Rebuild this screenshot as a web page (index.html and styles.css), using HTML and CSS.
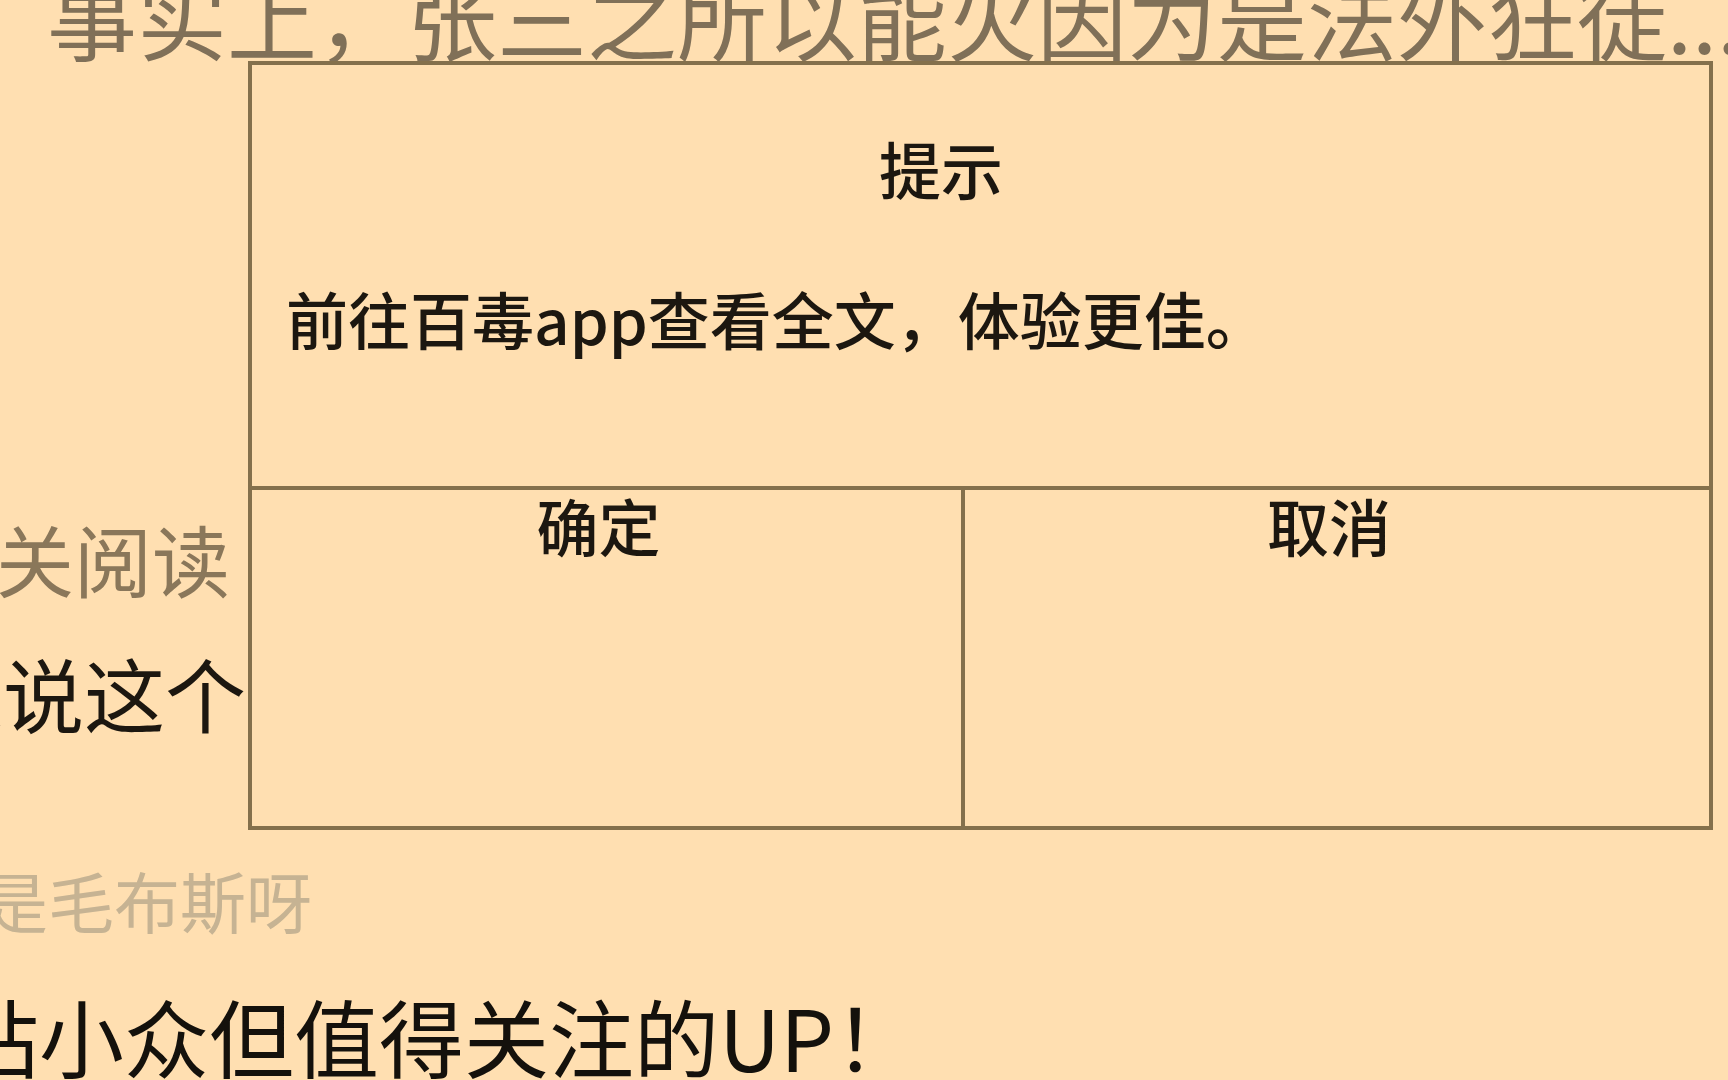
FILE: index.html
```html
<!DOCTYPE html>
<html lang="zh-CN">
<head>
<meta charset="utf-8">
<title>提示</title>
<link rel="stylesheet" href="styles.css">
</head>
<body>
<div class="page">
  <div class="feed">
    <p class="line line-summary">事实上，张三之所以能火因为是法外狂徒...</p>
    <p class="line line-related">相关阅读</p>
    <p class="line line-comment">来说这个</p>
    <p class="line line-author">就是毛布斯呀</p>
    <p class="line line-title">好站小众但值得关注的UP！</p>
  </div>

  <div class="dialog" role="dialog">
    <div class="dialog-main">
      <div class="dialog-title">提示</div>
      <div class="dialog-msg">前往百毒app查看全文，体验更佳。</div>
    </div>
    <div class="dialog-actions">
      <div class="dialog-btn dialog-btn-ok">确定</div>
      <div class="dialog-btn dialog-btn-cancel">取消</div>
    </div>
  </div>
</div>
</body>
</html>
```

FILE: styles.css
```css
html, body {
  margin: 0;
  padding: 0;
}

body {
  width: 1728px;
  height: 1080px;
  overflow: hidden;
  background: #ffdfb1;
  font-family: "Noto Sans CJK SC", "Noto Sans", sans-serif;
  color: #1c1710;
}

.page {
  position: relative;
  width: 1728px;
  height: 1080px;
  overflow: hidden;
}

.feed {
  display: flex;
  flex-direction: column;
}

.line {
  margin: 0;
  line-height: 1;
  white-space: nowrap;
}

.line-summary {
  font-size: 90px;
  color: #807058;
  margin-top: -30px;
  margin-left: 47px;
}

.line-related {
  font-size: 78px;
  color: #8a775a;
  margin-top: 459px;
  margin-left: -82px;
}

.line-comment {
  font-size: 81px;
  color: #1c1710;
  margin-top: 54px;
  margin-left: -78px;
}

.line-author {
  font-size: 66px;
  color: #c6b393;
  margin-top: 134px;
  margin-left: -84px;
}

.line-title {
  font-size: 85px;
  color: #14110c;
  margin-top: 60px;
  margin-left: -131px;
}

.dialog {
  position: absolute;
  left: 248px;
  top: 61px;
  width: 1465px;
  height: 769px;
  box-sizing: border-box;
  border: 4px solid #84704c;
  background: #ffdfb1;
  display: flex;
  flex-direction: column;
}

.dialog-main {
  height: 421px;
  border-bottom: 4px solid #84704c;
  box-sizing: content-box;
}

.dialog-title {
  padding-top: 72px;
  padding-right: 79px;
  text-align: center;
  font-size: 62px;
  font-weight: 500;
  line-height: 1;
  color: #1c1710;
}

.dialog-msg {
  margin-top: 88px;
  padding-left: 34px;
  font-size: 62px;
  font-weight: 500;
  line-height: 1;
  color: #1c1710;
}

.dialog-actions {
  flex: 1;
  display: grid;
  grid-template-columns: 713px 1fr;
}

.dialog-btn {
  padding-top: 4px;
  padding-right: 16px;
  text-align: center;
  font-size: 62px;
  font-weight: 500;
  line-height: 1;
  color: #1c1710;
}

.dialog-btn-ok {
  box-sizing: border-box;
  border-right: 4px solid #84704c;
}
```
